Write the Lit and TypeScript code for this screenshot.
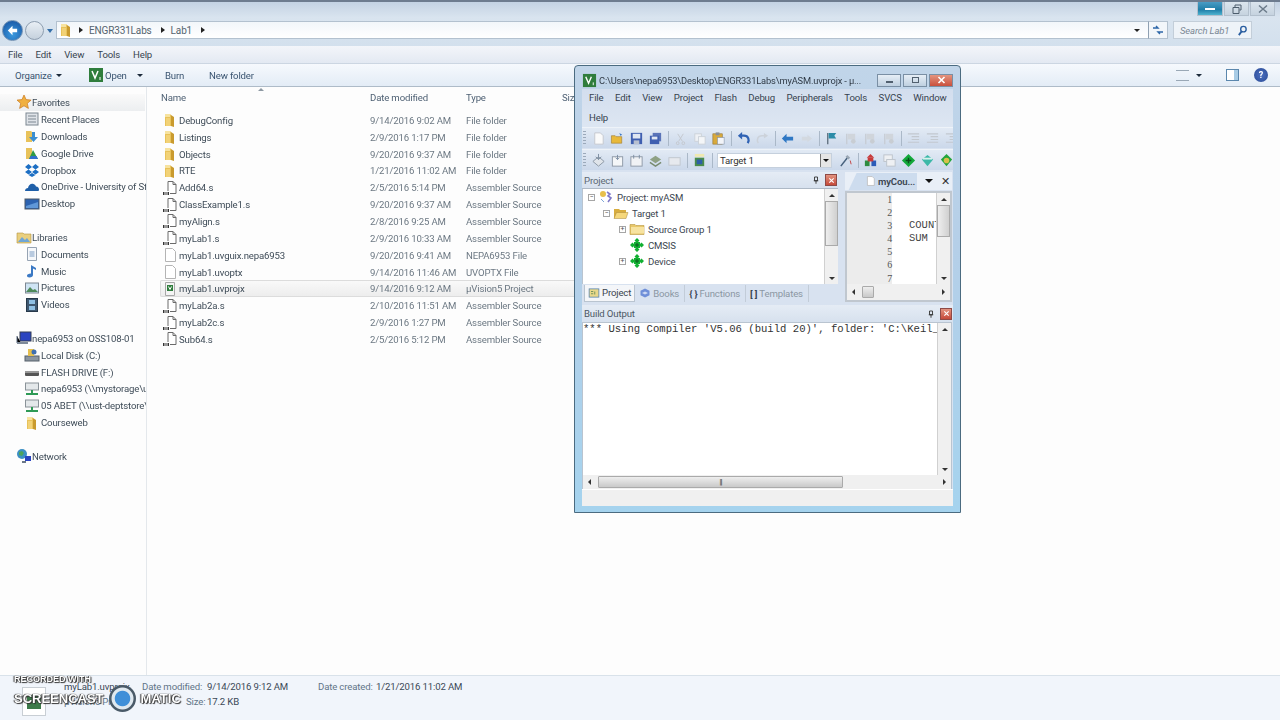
import { LitElement, html, css, svg } from "lit";
import { customElement } from "lit/decorators.js";

// small icon set, all drawn on a 16x16 box
const ic = (body: unknown, cls = "ic") => html`<svg class=${cls} viewBox="0 0 16 16">${body}</svg>`;

const folder = ic(svg`<path d="M3 2h5l1 1v11H3z" fill="#e8c25a"/><path d="M9 3l3 2v10l-3-1z" fill="#c99a2e"/><path d="M3 2h5v3H3z" fill="#f7e3a0"/><path d="M4 6h4v8H4z" fill="#f2d277"/>`);
const asmFile = ic(svg`<path d="M6 1.500h5l3 3v9H6z" fill="#fff" stroke="#6a6a6a"/><path d="M11 1.500v3h3" fill="none" stroke="#6a6a6a"/><path d="M1 11h7v4H1z" fill="#fff"/><path d="M1.500 12v3M3 12v3M5 12v3M6.500 12v3" stroke="#333" stroke-width="1"/>`);
const blankFile = ic(svg`<path d="M3.500 1.500h7l3 3v10h-10z" fill="#fff" stroke="#b4b4b4"/>`);
const projFile = ic(svg`<path d="M3.500 1.500h9v13h-9z" fill="#f4f4f4" stroke="#a8a8a8"/><rect x="5" y="4" width="6" height="6" fill="#2f7d3c"/><path d="M6.500 5.500l1.500 3 1.500-3" stroke="#fff" fill="none"/>`);
const star = ic(svg`<path d="M8 1l2.100 4.600 5 .5-3.800 3.300 1.100 5L8 11.800 3.600 14.400l1.100-5L1 6.100l5-.5z" fill="#f0b040" stroke="#c9781e" stroke-width=".7"/>`);
const recent = ic(svg`<rect x="2" y="2" width="12" height="12" fill="#dfe3e8" stroke="#7d8791"/><path d="M4 5h8M4 8h8M4 11h8" stroke="#7d8791"/>`);
const downloads = ic(svg`<path d="M2 3h5l1 1v10H2z" fill="#e8c25a"/><path d="M11 4v5h3l-4.500 5L5 9h3V4z" fill="#3b8ed0"/>`);
const gdrive = ic(svg`<path d="M2 3h6v11H2z" fill="#e8c25a"/><path d="M9 5l5 9H5z" fill="#2d9a48"/><path d="M5 14h9l-1.500-3H7z" fill="#2f6fd0"/>`);
const dropbox = ic(svg`<path d="M4.500 2L1 5l3.500 2.500L8 5zM11.500 2L8 5l3.500 2.500L15 5zM4.500 7.500L1 10l3.500 2.500L8 10zM11.500 7.500L8 10l3.500 2.500L15 10z" fill="#1d6fc4"/><path d="M4.500 13L8 15l3.500-2-3.500-2z" fill="#1d6fc4"/>`);
const onedrive = ic(svg`<path d="M1 12c0-2 1.500-3 3-3 .5-3 3-5 5.500-4 1.500.5 2 1.500 2.500 2.500 2 0 3 1.500 3 3 0 1-.5 1.500-1 1.500z" fill="#1f5fa8"/>`);
const desktop = ic(svg`<rect x="1" y="3" width="14" height="10" fill="#2c62b0" stroke="#4a5868"/><path d="M2 10l12-4v6H2z" fill="#5f97d8"/>`);
const libraries = ic(svg`<path d="M1 4h6l1 1h7v9H1z" fill="#e9cf7e" stroke="#b6953f" stroke-width=".6"/><path d="M2 13l4-5 3 3 2-2 3 4z" fill="#6fa6d6"/>`);
const documents = ic(svg`<path d="M3.500 1.500h9v13h-9z" fill="#f6f8fb" stroke="#96a3b3"/><path d="M5.500 6h5M5.500 8h5M5.500 10h5" stroke="#7a9cc4"/>`);
const music = ic(svg`<path d="M7 2l5 3v2L9 5.500V12c0 1.500-1.500 2.500-3.500 2.500S3 13.500 3 12.500 4.500 10.500 7 10.500z" fill="#3b79c4"/>`);
const pictures = ic(svg`<rect x="1.500" y="3" width="13" height="10" fill="#cfe4f4" stroke="#7d8791"/><path d="M2 12l4-5 3 3 2-1 3 3z" fill="#4f8a5a"/>`);
const videos = ic(svg`<rect x="2.500" y="1.500" width="11" height="13" fill="#3f5870" stroke="#27394a"/><rect x="5" y="3" width="6" height="4" fill="#8fc0e4"/><rect x="5" y="9" width="6" height="4" fill="#8fc0e4"/>`);
const computer = ic(svg`<rect x="4" y="2" width="11" height="9" fill="#2a44c0" stroke="#333c55"/><path d="M1 6v7h4M6 13h6" stroke="#5a6a80"/><rect x="1" y="12" width="11" height="2" fill="#7f8a99"/>`);
const localDisk = ic(svg`<rect x="1" y="9" width="14" height="5" fill="#8b95a0" stroke="#56606b"/><path d="M4 2h6v7H4z" fill="#e6c04f"/><circle cx="10" cy="5" r="2.500" fill="#3f6fb0"/>`);
const flash = ic(svg`<rect x="1" y="7" width="14" height="5" rx="1" fill="#555"/><rect x="1" y="7" width="14" height="2" fill="#999"/>`);
const netDrive = ic(svg`<rect x="1.500" y="2" width="13" height="7" fill="#e4e8ea" stroke="#8a9298"/><path d="M8 9v3" stroke="#2f9a56" stroke-width="2"/><path d="M2 13h12" stroke="#2f9a56" stroke-width="2"/>`);
const network = ic(svg`<circle cx="6" cy="6" r="5" fill="#3c8fc4"/><path d="M3 4l3-1 2 2-2 3-3-1z" fill="#4da35c"/><rect x="9" y="8" width="6" height="5" fill="#2a44c0"/><path d="M6 13h4v2H6z" fill="#6a7788"/>`);
const uvLogo = (cls: string) => ic(svg`<rect x="1" y="1" width="14" height="14" fill="#2f7d3c"/><path d="M4 4l3 7 3-7" stroke="#fff" stroke-width="1.500" fill="none"/><path d="M12 10v3" stroke="#fff"/>`, cls);

// toolbar icons in the uVision window
const t = {
  newf: ic(svg`<path d="M4 2h6l3 3v9H4z" fill="#fafafa" stroke="#c4c8ce"/>`, "tic"),
  open: ic(svg`<path d="M1.500 5h4l1 1h6v7h-11z" fill="#e8b93a" stroke="#99752a" stroke-width=".6"/><path d="M10 2l3 2-2 1z" fill="#3d78c8"/>`, "tic"),
  save: ic(svg`<rect x="2" y="2" width="12" height="12" fill="#3f5fb0"/><rect x="4" y="3" width="8" height="5" fill="#dfe6f2"/><rect x="5" y="10" width="6" height="4" fill="#b8c0d0"/>`, "tic"),
  saveAll: ic(svg`<rect x="5" y="2" width="9" height="9" fill="#5b74b8"/><rect x="2" y="5" width="10" height="9" fill="#3f5fb0"/><rect x="4" y="6" width="6" height="3" fill="#dfe6f2"/>`, "tic"),
  cut: ic(svg`<path d="M5 3l5 8M11 3l-5 8" stroke="#c3c8ce" fill="none"/><circle cx="5" cy="13" r="1.500" fill="none" stroke="#c3c8ce"/><circle cx="11" cy="13" r="1.500" fill="none" stroke="#c3c8ce"/>`, "tic"),
  copy: ic(svg`<rect x="3" y="3" width="7" height="8" fill="#eef1f5" stroke="#ccd2d9"/><rect x="7" y="6" width="7" height="8" fill="#f4f6f8" stroke="#ccd2d9"/>`, "tic"),
  paste: ic(svg`<rect x="2" y="3" width="10" height="11" fill="#d8a93c" stroke="#8f6d24" stroke-width=".6"/><rect x="5" y="1.500" width="4" height="3" fill="#8a8f96"/><rect x="7" y="7" width="7" height="7" fill="#f2f4f8" stroke="#8090a8" stroke-width=".6"/>`, "tic"),
  undo: ic(svg`<path d="M12.500 13c2-3 1-8-4-8H5" fill="none" stroke="#2f62b4" stroke-width="2.400"/><path d="M6.500 1L2 5l4.500 4z" fill="#2f62b4"/>`, "tic"),
  redo: ic(svg`<path d="M3.500 13c-2-3-1-8 4-8H11" fill="none" stroke="#ccd2da" stroke-width="1.600"/><path d="M9.500 2L14 5l-4.500 3z" fill="#ccd2da"/>`, "tic"),
  back: ic(svg`<path d="M7 3L2 8l5 5v-3h7V6H7z" fill="#2f78c4"/>`, "tic"),
  fwd: ic(svg`<path d="M9 4l5 4-5 4v-2H3V6h6z" fill="#d3d9e0"/>`, "tic"),
  flag: ic(svg`<path d="M4 2v12" stroke="#5c6c7a" stroke-width="1.400"/><path d="M5 2h8l-2 3 2 3H5z" fill="#2c8ca8"/>`, "tic"),
  flagOff: ic(svg`<path d="M4 3v11" stroke="#c6ccd3" stroke-width="1.400"/><path d="M5 3h8v6H5z" fill="#d0d5db"/><circle cx="11" cy="11" r="2.500" fill="#c8cdd3"/>`, "tic"),
  indent: ic(svg`<path d="M2 3h12M6 6h8M6 9h8M2 12h12" stroke="#c2c8cf" stroke-width="1.200"/>`, "tic"),
  build1: ic(svg`<path d="M2 9l6-5 6 5-6 5z" fill="#dfe4ea" stroke="#8b96a4"/><path d="M8 1v6M5 4l3 3 3-3" stroke="#7c8da0" fill="none"/>`, "tic"),
  build2: ic(svg`<rect x="2.500" y="4" width="11" height="10" fill="#f4f6f8" stroke="#8d98a6"/><path d="M8 2v5M6 5l2 2 2-2" stroke="#7d8ea3" fill="none"/>`, "tic"),
  build3: ic(svg`<rect x="2" y="4" width="12" height="10" fill="#f0f2f5" stroke="#8d98a6"/><path d="M5 2v4M11 2v4" stroke="#7d8ea3"/>`, "tic"),
  build4: ic(svg`<path d="M2 7l6-4 6 4-6 4z" fill="#8fa184"/><path d="M2 10l6 4 6-4" fill="none" stroke="#778a6e" stroke-width="1.500"/>`, "tic"),
  build5: ic(svg`<rect x="2" y="5" width="12" height="8" fill="#e6e9ee" stroke="#c0c6ce"/>`, "tic"),
  load: ic(svg`<rect x="3" y="5" width="10" height="9" fill="#4a8c4a"/><rect x="5" y="7" width="6" height="5" fill="#2d5fa8"/><path d="M3 1h10v3H3z" fill="#efe9b0"/>`, "tic"),
  wand: ic(svg`<path d="M3 14L10 5" stroke="#46607c" stroke-width="1.600"/><path d="M10 2l3 3-2 2-3-3z" fill="#9aa7b4"/><path d="M13 8l1 4" stroke="#c24040"/>`, "tic wand"),
  pack: ic(svg`<path d="M8 1l4 4H4z" fill="#c83b3b"/><rect x="2" y="8" width="5" height="6" fill="#2e8c40"/><rect x="9" y="8" width="5" height="6" fill="#2a5bb8"/><rect x="5" y="5" width="6" height="4" fill="#c83b3b"/>`, "tic"),
  sheets: ic(svg`<rect x="2" y="2" width="9" height="7" fill="#eef0f3" stroke="#bcc3cb"/><rect x="5" y="7" width="9" height="7" fill="#eef0f3" stroke="#bcc3cb"/>`, "tic"),
  green: ic(svg`<path d="M8 1l7 7-7 7-7-7z" fill="#12a83a"/><path d="M8 5v6M5 8h6" stroke="#0a4d1c" stroke-width="1.500"/>`, "tic"),
  cyan: ic(svg`<path d="M8 2l6 5-6 7-6-7z" fill="#3cb8a8"/><path d="M3 6h10" stroke="#d8f0ec" stroke-width="2"/>`, "tic"),
  multi: ic(svg`<path d="M8 1l6 6-6 7-6-7z" fill="#22a53c"/><circle cx="8" cy="8" r="3" fill="#d7c04a"/>`, "tic"),
};

const treeGreen = ic(svg`<path d="M8 1l2.500 2.500L8 6 5.500 3.500zM3.500 5.500L6 8l-2.500 2.500L1 8zM12.500 5.500L15 8l-2.500 2.500L10 8zM8 10l2.500 2.500L8 15l-2.500-2.500z" fill="#12b032"/><rect x="5" y="5" width="6" height="6" fill="#12b032"/><path d="M8 6v4M6 8h4" stroke="#0a5a1e"/>`);
const projectIcon = ic(svg`<circle cx="5" cy="5" r="3" fill="#e7c04c"/><path d="M9 3l3 2-2 2 3 2-3 4" fill="none" stroke="#7f7ac8" stroke-width="1.600"/><path d="M3 10l3 3" stroke="#7fa8d8"/>`);
const openFolder = ic(svg`<path d="M1 4h5l1 1h6v8H1z" fill="#d8ad3f"/><path d="M3.500 7.500H15l-2 6H1z" fill="#f5d77b" stroke="#a9863a" stroke-width=".5"/>`);
const closedFolder = ic(svg`<path d="M1 3.500h5l1 1h8v9H1z" fill="#e8c86a" stroke="#b8963f" stroke-width=".6"/><path d="M2 6h13v6.500H2z" fill="#f7e3a0"/>`);
const tabProject = ic(svg`<rect x="1.500" y="2.500" width="13" height="11" fill="#e9d88a" stroke="#4f7fb0"/><path d="M4 6h3M4 9h3M9 6v4" stroke="#4f7f50"/>`);
const tabBooks = ic(svg`<path d="M8 2l6 3v6l-6 3-6-3V5z" fill="#6f8fd8"/><path d="M8 6l4 2-4 2-4-2z" fill="#cdd9f4"/>`);

const pin = html`<svg class="pin" viewBox="0 0 8 10"><path d="M2 1h4v5H2zM1 6h6M4 6v4" fill="none" stroke="#333" stroke-width="1.200"/></svg>`;
const closeBox = html`<span class="closebox"><svg viewBox="0 0 8 8"><path d="M1.500 1.500l5 5M6.500 1.500l-5 5" stroke="#fff" stroke-width="1.300"/></svg></span>`;
const plusBox = html`<span class="exp">+</span>`;
const minusBox = html`<span class="exp">−</span>`;

const SIDEBAR: [unknown, string, string][] = [
  [star, "Favorites", "head sel"],
  [recent, "Recent Places", ""],
  [downloads, "Downloads", ""],
  [gdrive, "Google Drive", ""],
  [dropbox, "Dropbox", ""],
  [onedrive, "OneDrive - University of St. Thomas", ""],
  [desktop, "Desktop", ""],
  [null, "", "gap"],
  [libraries, "Libraries", "head"],
  [documents, "Documents", ""],
  [music, "Music", ""],
  [pictures, "Pictures", ""],
  [videos, "Videos", ""],
  [null, "", "gap"],
  [computer, "nepa6953 on OSS108-01", "head"],
  [localDisk, "Local Disk (C:)", ""],
  [flash, "FLASH DRIVE (F:)", ""],
  [netDrive, "nepa6953 (\\\\mystorage\\users)", ""],
  [netDrive, "05 ABET (\\\\ust-deptstore\\dept)", ""],
  [folder, "Courseweb", ""],
  [null, "", "gap"],
  [network, "Network", "head"],
];

const FILES: [unknown, string, string, string][] = [
  [folder, "DebugConfig", "9/14/2016 9:02 AM", "File folder"],
  [folder, "Listings", "2/9/2016 1:17 PM", "File folder"],
  [folder, "Objects", "9/20/2016 9:37 AM", "File folder"],
  [folder, "RTE", "1/21/2016 11:02 AM", "File folder"],
  [asmFile, "Add64.s", "2/5/2016 5:14 PM", "Assembler Source"],
  [asmFile, "ClassExample1.s", "9/20/2016 9:37 AM", "Assembler Source"],
  [asmFile, "myAlign.s", "2/8/2016 9:25 AM", "Assembler Source"],
  [asmFile, "myLab1.s", "2/9/2016 10:33 AM", "Assembler Source"],
  [blankFile, "myLab1.uvguix.nepa6953", "9/20/2016 9:41 AM", "NEPA6953 File"],
  [blankFile, "myLab1.uvoptx", "9/14/2016 11:46 AM", "UVOPTX File"],
  [projFile, "myLab1.uvprojx", "9/14/2016 9:12 AM", "µVision5 Project"],
  [asmFile, "myLab2a.s", "2/10/2016 11:51 AM", "Assembler Source"],
  [asmFile, "myLab2c.s", "2/9/2016 1:27 PM", "Assembler Source"],
  [asmFile, "Sub64.s", "2/5/2016 5:12 PM", "Assembler Source"],
];

const sep = html`<i class="sep"></i>`;
const grip = html`<i class="grip"></i>`;

@customElement("app-root")
export class AppRoot extends LitElement {
  static styles = css`
    :host {
      display: block;
      position: relative;
      width: 1280px;
      height: 720px;
      overflow: hidden;
      background: #fdfdfd;
      font-family: Roboto, "Noto Sans", sans-serif;
      font-size: 9.600px;
      letter-spacing: -0.15px;
      color: #2c3a4a;
    }
    .shot { position: relative; width: 1280px; height: 720px; filter: blur(0.35px); }
    .page { display: flex; flex-direction: column; height: 720px; }
    .ic { width: 16px; height: 16px; flex: none; }
    .tic { width: 15px; height: 15px; flex: none; }

    /* explorer chrome */
    .frame { height: 46px; flex: none; background: linear-gradient(#c3d2e3, #d9e4ef 35%, #d3e0ed); border-top: 2px solid #6d7c8f; box-sizing: border-box; display: flex; flex-direction: column; }
    .caps { height: 18px; display: flex; justify-content: flex-end; gap: 1px; padding-right: 5px; }
    .cap { width: 25px; height: 14px; display: flex; align-items: center; justify-content: center; background: linear-gradient(#dbe5ee, #c6d3df); border: 1px solid #b3c0cd; border-top: 0; box-sizing: border-box; }
    .cap svg { width: 12px; height: 10px; }
    .cap.min { width: 26px; background: linear-gradient(#4a9cc4, #1f7ea8 60%, #4fb3cf); }
    .nav { display: flex; align-items: center; height: 20px; padding-left: 2px; }
    .back { width: 21px; height: 21px; border-radius: 50%; background: radial-gradient(circle at 50% 70%, #3b9ae0, #154e9c); border: 1px solid #6f8fb2; box-sizing: border-box; display: flex; align-items: center; justify-content: center; }
    .back svg { width: 13px; height: 13px; }
    .fwd { width: 19px; height: 19px; margin-left: 2px; border-radius: 50%; background: linear-gradient(#e9eff5, #c5d1dd); border: 1px solid #8e9eb0; box-sizing: border-box; }
    .drop { width: 0; height: 0; border: 3.500px solid transparent; border-top: 4px solid #336ea8; border-bottom: 0; margin: 2px 3px 0 3px; }
    .addr { width: 1093px; height: 18px; background: linear-gradient(#f2f6fa, #fff); border: 1px solid #b3c1cf; box-sizing: border-box; display: flex; align-items: center; padding-left: 1px; color: #55646f; font-size: 10px; }
    .addr .ic { margin-right: 5px; }
    .crumb { margin: 0 9px 0 6px; }
    .tri { width: 0; height: 0; border: 3px solid transparent; border-left: 4px solid #222; border-right: 0; }
    .caret { width: 0; height: 0; border: 3px solid transparent; border-top: 3px solid #222; border-bottom: 0; margin-left: auto; margin-right: 8px; }
    .refresh { width: 20px; height: 18px; border: 1px solid #b3c1cf; border-left: 1px solid #8fa0b2; background: #f2f6fa; box-sizing: border-box; margin-left: -1px; display: flex; align-items: center; justify-content: center; }
    .refresh svg { width: 12px; height: 10px; }
    .search { width: 79px; height: 18px; margin-left: 5px; background: #eef3f8; border: 1px solid #c3ced9; box-sizing: border-box; display: flex; align-items: center; padding: 0 3px 0 6px; font-style: italic; color: #7b8895; font-size: 9.500px; justify-content: space-between; }
    .search svg { width: 11px; height: 11px; }

    .menu { height: 17px; flex: none; display: flex; align-items: center; gap: 13px; padding-left: 8px; background: linear-gradient(#f3f5fa, #e3e9f2); color: #37444f; }
    .cmd { height: 24px; flex: none; display: flex; align-items: center; background: linear-gradient(#f6f9fd, #e3ecf6); border-top: 1px solid #ccd6e2; border-bottom: 1px solid #aebbc8; box-sizing: border-box; color: #3a5470; padding-left: 15px; }
    .cmd .d { width: 0; height: 0; border: 3px solid transparent; border-top: 3px solid #1c2a3a; border-bottom: 0; }
    .organize { width: 73px; display: flex; gap: 4px; align-items: center; }
    .openb { display: flex; align-items: center; width: 77px; gap: 1px; }
    .openb .d { margin-left: 9px; }
    .burn { width: 44px; }
    .cmd .right { margin-left: auto; display: flex; align-items: center; padding-right: 12px; }
    .views { width: 13px; height: 9px; border-top: 1px solid #9aa8b6; border-bottom: 1px solid #9aa8b6; margin-right: 7px; }
    .pane { width: 13px; height: 12px; margin-left: 24px; border: 1px solid #5b87ad; background: linear-gradient(to right, #fff 60%, #a9cce5 60%); box-sizing: border-box; }
    .help { width: 14px; height: 14px; margin-left: 15px; border-radius: 50%; background: radial-gradient(#4b6fc0, #2a4a94); color: #fff; font-size: 9px; font-weight: 700; display: flex; align-items: center; justify-content: center; }

    .body { flex: 1; min-height: 0; display: flex; }
    .side { width: 147px; flex: none; box-sizing: border-box; border-right: 1px solid #e4e8ec; padding-top: 7px; overflow: hidden; }
    .srow { height: 16.900px; display: flex; align-items: center; padding-left: 24px; gap: 1px; white-space: nowrap; color: #3f4c58; }
    .srow.head { padding-left: 16px; gap: 0; }
    .srow.sel { background: linear-gradient(#fafafa, #eceef0); margin-right: 1px; }
    .srow.gap { height: 16.600px; }
    .files { flex: 1; min-width: 0; padding-top: 1px; position: relative; }
    .colhead { display: grid; grid-template-columns: 209px 96px 96px 1fr; padding-left: 14px; height: 18px; align-items: center; color: #4f6174; }
    .sortmark { position: absolute; left: 111px; top: 1px; width: 0; height: 0; border: 3px solid transparent; border-bottom: 3px solid #8e99a3; border-top: 0; }
    .list { margin-top: 6px; }
    .frow { display: grid; grid-template-columns: 208px 96px 96px 1fr; height: 16.850px; align-items: center; padding-left: 15px; box-sizing: border-box; color: #6c7883; }
    .frow .n { display: flex; align-items: center; gap: 1px; color: #3f4c58; white-space: nowrap; }
    .frow.on { background: linear-gradient(#fafafa, #ececec); box-shadow: inset 0 0 0 1px #dcdcdc; border-radius: 2px; margin-left: 13px; padding-left: 2px; width: 420px; }

    .details { height: 45px; flex: none; box-sizing: border-box; border-top: 1px solid #d9e2ea; background: #f1f5fb; display: grid; grid-template-columns: 22px 42px 78px 65px 111px 58px 1fr; grid-template-rows: 15px 15px; padding-top: 5px; color: #5f7488; align-content: start; }
    .details span { white-space: nowrap; }
    .details .big { grid-row: 1 / 3; grid-column: 2; width: 24px; height: 29px; margin-top: 6px; background: #fff; border: 1px solid #c8ced4; box-sizing: border-box; display: flex; align-items: center; justify-content: center; }
    .details .bigin { width: 14px; height: 14px; background: #3d7a4a; }
    .details .v { color: #3a4856; }
    .details .name { color: #3a4856; grid-column: 3; }
    .details .kind { grid-column: 3; grid-row: 2; }
    .details .c4 { grid-column: 4; grid-row: 1; }
    .details .c5 { grid-column: 5; grid-row: 1; }
    .details .c6 { grid-column: 6; grid-row: 1; }
    .details .c7 { grid-column: 7; grid-row: 1; }
    .details .size { grid-column: 4; grid-row: 2; padding-left: 44px; }
    .details .sizev { grid-column: 5; grid-row: 2; }

    /* uVision window, free on the desktop */
    .win { position: absolute; left: 574px; top: 65px; width: 387px; height: 448px; box-sizing: border-box; border: 1px solid #4b6b80; border-radius: 4px 4px 0 0; background: linear-gradient(#c1d5e9, #b5cfe8 40%, #a5d3ee); padding: 5px 7px 6px 7px; display: flex; flex-direction: column; }
    .wtitle { height: 18px; flex: none; display: flex; align-items: center; gap: 2px; color: #2f3a46; white-space: nowrap; font-size: 9.300px; }
    .wtitle .btns { margin-left: auto; display: flex; gap: 2px; }
    .wb { width: 24px; height: 13px; border: 1px solid #7a8fa4; background: linear-gradient(#e6eef6, #bfd0e0); box-sizing: border-box; display: flex; align-items: center; justify-content: center; }
    .wb.x { background: linear-gradient(#e4947f, #c9503c); }
    .wb svg { width: 9px; height: 8px; }
    .inner { flex: 1; min-height: 0; display: flex; flex-direction: column; background: #d8e2f0; }
    .wmenu { flex: none; height: 38px; display: flex; flex-wrap: wrap; align-content: flex-start; padding-left: 7px; background: linear-gradient(#d3deee, #dde6f2); color: #36424e; column-gap: 11.500px; }
    .wmenu span { height: 20px; line-height: 18px; }
    .tb { flex: none; height: 21px; display: flex; align-items: center; background: linear-gradient(#e2eaf4, #cbd8ea); border-top: 1px solid #eef3f9; box-sizing: border-box; overflow: hidden; padding-left: 1px; margin-bottom: 1px; }
    .tb.last { margin-bottom: 2px; }
    .tb .tic { margin: 0 2px; }
    .tb .wand { margin-left: 4px; }
    .sep { width: 1px; height: 15px; background: #aab8c8; margin: 0 2.500px; flex: none; }
    .grip { width: 3px; height: 15px; background: repeating-linear-gradient(#9ba9ba 0 1px, transparent 1px 3px); margin: 0 3px 0 0; flex: none; }
    .combo { width: 115px; height: 15px; background: #fff; border: 1px solid #c5d0dd; box-sizing: border-box; display: flex; align-items: center; padding-left: 2px; color: #333; flex: none; margin: 0 2px; }
    .combo b { margin-left: auto; width: 10px; height: 13px; background: #e6e6e6; border-left: 1px solid #777; display: flex; align-items: center; justify-content: center; }
    .combo b::after { content: ""; border: 3px solid transparent; border-top: 3px solid #111; border-bottom: 0; }

    .mid { flex: none; height: 130px; display: flex; gap: 7px; }
    .proj { width: 256px; flex: none; display: flex; flex-direction: column; }
    .phead { height: 17px; flex: none; display: flex; align-items: center; padding-left: 2px; color: #5c6874; background: linear-gradient(#e5ecf5, #d7e1ee); border-bottom: 1px solid #aeb9c6; box-sizing: border-box; }
    .pin { width: 6px; height: 8px; margin-left: auto; margin-right: 6px; }
    .closebox { width: 12px; height: 12px; background: linear-gradient(#e2937f, #c64a3a); border: 1px solid #8e4a46; box-sizing: border-box; display: flex; align-items: center; justify-content: center; margin-right: 1px; }
    .closebox svg { width: 7px; height: 7px; }
    .tree { height: 95px; flex: none; background: #fff; display: flex; border-left: 1px solid #b9c4d0; box-sizing: border-box; }
    .nodes { flex: 1; padding: 0 0 0 5px; }
    .node { height: 16px; display: flex; align-items: center; gap: 3px; color: #3b4650; white-space: nowrap; }
    .exp { width: 7px; height: 7px; border: 1px solid #a6a6a6; box-sizing: border-box; font-size: 7px; line-height: 5px; text-align: center; color: #555; flex: none; }
    .d1 { padding-left: 15px; }
    .d2 { padding-left: 31px; }
    .d2b { padding-left: 41px; }
    .vbar { width: 14px; flex: none; background: #f0f0f0; border-left: 1px solid #d0d0d0; box-sizing: border-box; display: flex; flex-direction: column; align-items: center; }
    .vbar .up, .vbar .dn { width: 13px; height: 12px; display: flex; align-items: center; justify-content: center; flex: none; }
    .vbar .up::after { content: ""; border: 3px solid transparent; border-bottom: 3px solid #333; border-top: 0; }
    .vbar .dn::after { content: ""; border: 3px solid transparent; border-top: 3px solid #333; border-bottom: 0; }
    .vbar .th { width: 13px; background: linear-gradient(to right, #eee, #d0d0d0); border: 1px solid #aaa; box-sizing: border-box; flex: none; }
    .vbar .th.tall { height: 45px; }
    .vbar .th.short { height: 32px; }
    .vbar .sp { flex: 1; }
    .ptabs { flex: 1; display: flex; align-items: center; background: #d8e2f0; color: #8b97a3; gap: 4px; padding-left: 2px; }
    .ptab { display: flex; align-items: center; gap: 2px; height: 17px; padding-right: 5px; border-right: 1px solid #c2ccd8; white-space: nowrap; }
    .ptab.on { background: #f4f6f9; color: #39444f; padding: 0 3px; border: 1px solid #b9c4d0; border-top: 0; box-sizing: border-box; }
    .ptab .ic { width: 12px; height: 12px; }
    .ptab b { color: #3a4450; }

    .edit { flex: 1; min-width: 0; display: flex; flex-direction: column; margin-right: 1px; }
    .etabs { height: 18px; flex: none; display: flex; align-items: center; background: #e9eff7; margin-bottom: 1px; }
    .etab { width: 72px; height: 17px; flex: none; display: flex; align-items: center; gap: 2px; padding-left: 20px; box-sizing: border-box; background: linear-gradient(115deg, #e9eff7 10px, #cddcee 11px); font-weight: 600; color: #3a4450; }
    .etab .ic { width: 11px; height: 12px; }
    .etabs .tri2 { width: 0; height: 0; border: 4px solid transparent; border-top: 4px solid #111; border-bottom: 0; margin-left: 8px; }
    .etabs .xx { margin-left: 8px; font-size: 11px; color: #333; }
    .ebody { flex: 1; min-height: 0; background: #c0c7cf; padding: 2px; display: flex; flex-direction: column; }
    .ecode { height: 91px; flex: none; display: flex; background: #fff; overflow: hidden; }
    .lines { width: 45px; flex: none; background: #ececec; text-align: right; padding-right: 0; box-sizing: border-box; font-family: "Liberation Serif", serif; color: #555; font-size: 10px; }
    .lines div, .src div { height: 13.100px; line-height: 13px; }
    .src { flex: 1; min-width: 0; font-family: "Liberation Mono", monospace; font-size: 10.500px; letter-spacing: 0; color: #444; padding-left: 17px; white-space: pre; overflow: hidden; }
    .hbar { flex: 1; background: #f0f0f0; display: flex; align-items: center; padding: 0 5px; }
    .hbar .l { border: 3px solid transparent; border-right: 3px solid #333; border-left: 0; }
    .hbar .r { border: 3px solid transparent; border-left: 3px solid #333; border-right: 0; margin-left: auto; }
    .hbar .th { height: 12px; background: linear-gradient(#eee, #c9c9c9); border: 1px solid #aaa; border-radius: 1px; box-sizing: border-box; flex: none; display: flex; align-items: center; justify-content: center; font-size: 7px; color: #444; letter-spacing: -1px; }
    .th.small { width: 12px; margin-left: 7px; }
    .th.long { width: 245px; margin-left: 7px; }

    .bhead { margin-top: 3px; height: 17px; flex: none; display: flex; align-items: center; padding-left: 2px; color: #4c5864; background: linear-gradient(#e5ecf5, #d7e1ee); }
    .bout { flex: 1; min-height: 0; display: flex; flex-direction: column; background: #fff; border: 1px solid #b9c4d0; border-bottom: 0; margin-right: 1px; }
    .btext { flex: 1; min-height: 0; display: flex; }
    .mono { flex: 1; min-width: 0; overflow: hidden; white-space: pre; font-family: "Liberation Mono", monospace; font-size: 10.600px; letter-spacing: 0; color: #333; line-height: 13px; }
    .status { height: 16px; flex: none; background: #f0f0f0; border-top: 1px solid #fff; }
    .bhbar { height: 14px; flex: none; display: flex; }

    /* recorder watermark laid over the details pane */
    .wm { position: absolute; left: 14px; top: 673px; color: #fff; letter-spacing: 0; text-shadow: 0 0 1px #333, 1px 1px 1px #333, -1px 0 1px #333; font-weight: 700; white-space: nowrap; pointer-events: none; font-family: "Liberation Sans", sans-serif; }
    .wm .r1 { font-size: 9px; line-height: 12px; }
    .wm .r2 { font-size: 13px; line-height: 20px; display: flex; align-items: center; }
    .wm .o { width: 27px; height: 27px; border-radius: 50%; background: radial-gradient(#3f8fd8 38%, #dfe8ef 43%, #dfe8ef 55%, #4a5a68 60%); margin: 0 5px 0 5px; flex: none; }
  `;

  render() {
    return html`
      <div class="shot">
      <div class="page">
        <div class="frame">
          <div class="caps">
            <span class="cap min"><svg viewBox="0 0 12 10"><rect x="1" y="4" width="10" height="2" fill="#fff"/></svg></span>
            <span class="cap"><svg viewBox="0 0 12 10"><path d="M2 3.500h6v6H2zM4 3V1h6v5H8.500" fill="none" stroke="#4c5d6d"/></svg></span>
            <span class="cap"><svg viewBox="0 0 12 10"><path d="M2 1.500l8 7M10 1.500l-8 7" stroke="#6b7b8a" stroke-width="1.500"/></svg></span>
          </div>
          <div class="nav">
            <span class="back"><svg viewBox="0 0 14 14"><path d="M7 2L2 7l5 5V9h5V5H7z" fill="#fff"/></svg></span>
            <span class="fwd"></span>
            <span class="drop"></span>
            <div class="addr">
              ${folder}<span class="tri"></span><span class="crumb">ENGR331Labs</span><span class="tri"></span><span class="crumb">Lab1</span><span class="tri"></span>
              <span class="caret"></span>
            </div>
            <span class="refresh"><svg viewBox="0 0 12 10"><path d="M1 3h5L4 1M11 7H6l2 2" fill="none" stroke="#2c66a8" stroke-width="1.400"/></svg></span>
            <div class="search">
              Search Lab1
              <svg viewBox="0 0 12 12"><circle cx="7" cy="4.500" r="3" fill="none" stroke="#2a5ea0" stroke-width="1.500"/><path d="M5 7l-3 4" stroke="#2a5ea0" stroke-width="2"/></svg>
            </div>
          </div>
        </div>
        <div class="menu"><span>File</span><span>Edit</span><span>View</span><span>Tools</span><span>Help</span></div>
        <div class="cmd">
          <span class="organize">Organize <i class="d"></i></span>
          <span class="openb">${uvLogo("ic")} Open <i class="d"></i></span>
          <span class="burn">Burn</span>
          <span>New folder</span>
          <span class="right"><span class="views"></span><i class="d"></i><span class="pane"></span><span class="help">?</span></span>
        </div>
        <div class="body">
          <div class="side">
            ${SIDEBAR.map(([icon, label, cls]) => html`<div class="srow ${cls}">${icon}${label ? html`<span>${label}</span>` : ""}</div>`)}
          </div>
          <div class="files">
            <i class="sortmark"></i>
            <div class="colhead"><span>Name</span><span>Date modified</span><span>Type</span><span>Size</span></div>
            <div class="list">
              ${FILES.map(([icon, name, date, type]) => html`
                <div class="frow ${name === "myLab1.uvprojx" ? "on" : ""}">
                  <span class="n">${icon}${name}</span><span>${date}</span><span>${type}</span>
                </div>`)}
            </div>
          </div>
        </div>
        <div class="details">
          <span class="big"><i class="bigin"></i></span>
          <span class="name">myLab1.uvprojx</span>
          <span class="kind">µVision5 Project</span>
          <span class="c4">Date modified:</span>
          <span class="v c5">9/14/2016 9:12 AM</span>
          <span class="c6">Date created:</span>
          <span class="v c7">1/21/2016 11:02 AM</span>
          <span class="size">Size:</span>
          <span class="v sizev">17.2 KB</span>
        </div>
      </div>

      <div class="win">
        <div class="wtitle">
          ${uvLogo("tic")}
          <span>C:\\Users\\nepa6953\\Desktop\\ENGR331Labs\\myASM.uvprojx - µ...</span>
          <span class="btns">
            <span class="wb"><svg viewBox="0 0 9 8"><rect x="1" y="5" width="7" height="2" fill="#51606f"/></svg></span>
            <span class="wb"><svg viewBox="0 0 9 8"><rect x="1.500" y="1.500" width="6" height="5" fill="none" stroke="#51606f"/></svg></span>
            <span class="wb x"><svg viewBox="0 0 9 8"><path d="M1.500 1l6 6M7.500 1l-6 6" stroke="#fff" stroke-width="1.600"/></svg></span>
          </span>
        </div>
        <div class="inner">
          <div class="wmenu">
            ${["File", "Edit", "View", "Project", "Flash", "Debug", "Peripherals", "Tools", "SVCS", "Window", "Help"].map((m) => html`<span>${m}</span>`)}
          </div>
          <div class="tb">
            ${grip}${t.newf}${t.open}${t.save}${t.saveAll}${sep}${t.cut}${t.copy}${t.paste}${sep}${t.undo}${t.redo}${sep}${t.back}${t.fwd}${sep}${t.flag}${t.flagOff}${t.flagOff}${t.flagOff}${sep}${t.indent}${t.indent}${t.indent}
          </div>
          <div class="tb last">
            ${grip}${t.build1}${t.build2}${t.build3}${t.build4}${t.build5}${sep}${t.load}${sep}
            <span class="combo">Target 1<b></b></span>
            ${t.wand}${sep}${t.pack}${t.sheets}${t.green}${t.cyan}${t.multi}
          </div>
          <div class="mid">
            <div class="proj">
              <div class="phead">Project ${pin}${closeBox}</div>
              <div class="tree">
                <div class="nodes">
                  <div class="node">${minusBox}${projectIcon}<span>Project: myASM</span></div>
                  <div class="node d1">${minusBox}${openFolder}<span>Target 1</span></div>
                  <div class="node d2">${plusBox}${closedFolder}<span>Source Group 1</span></div>
                  <div class="node d2b">${treeGreen}<span>CMSIS</span></div>
                  <div class="node d2">${plusBox}${treeGreen}<span>Device</span></div>
                </div>
                <div class="vbar"><span class="up"></span><span class="th tall"></span><span class="sp"></span><span class="dn"></span></div>
              </div>
              <div class="ptabs">
                <span class="ptab on">${tabProject}Project</span>
                <span class="ptab">${tabBooks}Books</span>
                <span class="ptab"><b>{ }</b> Functions</span>
                <span class="ptab"><b>[ ]</b> Templates</span>
              </div>
            </div>
            <div class="edit">
              <div class="etabs">
                <span class="etab">${blankFile}myCou...</span>
                <i class="tri2"></i>
                <span class="xx">✕</span>
              </div>
              <div class="ebody">
                <div class="ecode">
                  <div class="lines">${[1, 2, 3, 4, 5, 6, 7].map((n) => html`<div>${n}</div>`)}</div>
                  <div class="src"><div>    .</div><div></div><div>COUNT</div><div>SUM</div><div></div><div>    .</div></div>
                  <div class="vbar"><span class="up"></span><span class="th short"></span><span class="sp"></span><span class="dn"></span></div>
                </div>
                <div class="hbar"><i class="l"></i><span class="th small"></span><i class="r"></i></div>
              </div>
            </div>
          </div>
          <div class="bhead">Build Output ${pin}${closeBox}</div>
          <div class="bout">
            <div class="btext">
              <div class="mono">*** Using Compiler 'V5.06 (build 20)', folder: 'C:\\Keil_</div>
              <div class="vbar"><span class="up"></span><span class="sp"></span><span class="dn"></span></div>
            </div>
            <div class="bhbar"><div class="hbar"><i class="l"></i><span class="th long">|||</span><i class="r"></i></div></div>
          </div>
          <div class="status"></div>
        </div>
      </div>

      <div class="wm">
        <div class="r1">RECORDED WITH</div>
        <div class="r2">SCREENCAST<span class="o"></span>MATIC</div>
      </div>
      </div>
    `;
  }
}
